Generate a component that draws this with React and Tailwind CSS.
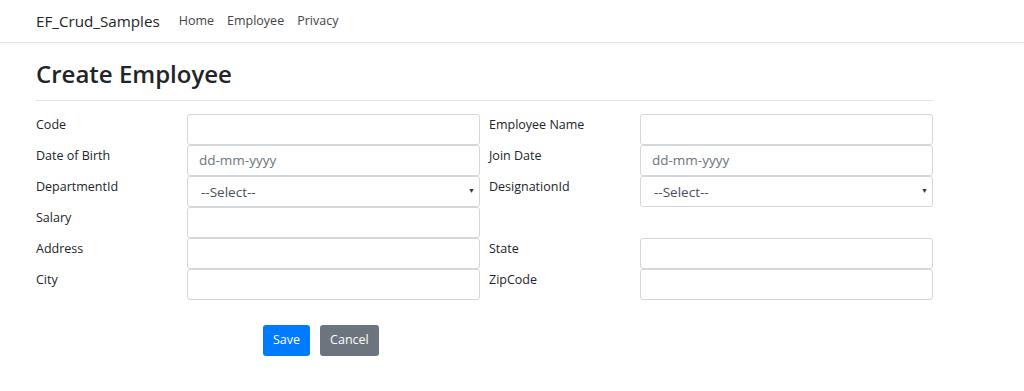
export default function App() {
  const font = { fontFamily: '"Open Sans", "Noto Sans", sans-serif' };

  const Input = ({ placeholder }) => (
    <div className="h-[31px] w-[293px] rounded-[3px] border border-[#d4d7da] bg-white flex items-center px-[11px] text-[13.5px] text-[#6c757d]">
      {placeholder}
    </div>
  );

  const Select = () => (
    <div className="h-[31px] w-[293px] rounded-[3px] border border-[#d4d7da] bg-white flex items-center justify-between pl-[13px] pr-[4px] text-[13.5px] text-[#495057]">
      <span className="pt-[2px]">--Select--</span>
      <span className="text-[7px] text-[#333]">▼</span>
    </div>
  );

  const Label = ({ children }) => (
    <div className="w-[151px] pt-[2px] text-[12.5px] text-[#212529]">{children}</div>
  );

  const rows = [
    [['Code', <Input />], ['Employee Name', <Input />]],
    [['Date of Birth', <Input placeholder="dd-mm-yyyy" />], ['Join Date', <Input placeholder="dd-mm-yyyy" />]],
    [['DepartmentId', <Select />], ['DesignationId', <Select />]],
    [['Salary', <Input />], null],
    [['Address', <Input />], ['State', <Input />]],
    [['City', <Input />], ['ZipCode', <Input />]],
  ];

  return (
    <div className="w-[1024px] h-[391px] bg-white overflow-hidden" style={font}>
      <nav className="h-[43px] border-b border-[#e5e5e5] shadow-[0_1px_4px_rgba(0,0,0,0.06)] flex items-center pl-[36px]">
        <span className="text-[15.2px] text-[#212529] mr-[19px]">EF_Crud_Samples</span>
        <div className="flex gap-[13px] text-[12.5px] text-[#444]">
          <span>Home</span>
          <span>Employee</span>
          <span>Privacy</span>
        </div>
      </nav>

      <div className="pl-[36px] w-[933px]">
        <h1 className="mt-[15px] text-[24px] font-semibold text-[#212529] leading-[32px]">Create Employee</h1>
        <div className="mt-[10px] border-t border-[#e2e2e2]" />

        <div className="mt-[13px] flex flex-col gap-0">
          {rows.map((row, i) => (
            <div key={i} className="flex h-[31px]">
              <div className="flex">
                <Label>{row[0][0]}</Label>
                {row[0][1]}
              </div>
              {row[1] && (
                <div className="flex ml-[9px]">
                  <Label>{row[1][0]}</Label>
                  {row[1][1]}
                </div>
              )}
            </div>
          ))}
        </div>

        <div className="mt-[25px] ml-[227px] flex gap-[10px]">
          <button className="h-[31px] px-[10px] rounded-[3px] bg-[#007bff] text-white text-[12.5px]">Save</button>
          <button className="h-[31px] px-[10px] rounded-[3px] bg-[#6c757d] text-white text-[12.5px]">Cancel</button>
        </div>
      </div>
    </div>
  );
}
